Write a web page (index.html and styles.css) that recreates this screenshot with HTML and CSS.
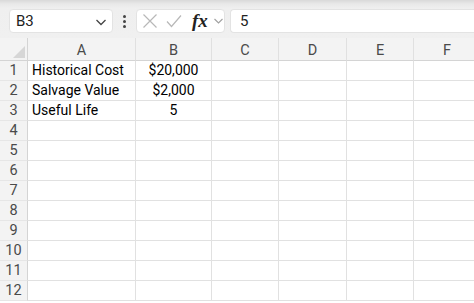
FILE: index.html
```html
<!DOCTYPE html>
<html>
<head>
<meta charset="utf-8">
<link rel="stylesheet" href="styles.css">
</head>
<body>
<div class="app">
  <div class="toolbar">
    <div class="namebox">
      <span class="name">B3</span>
      <svg class="chev" width="12" height="8" viewBox="0 0 12 8"><path d="M1.5 2 L6 6.5 L10.5 2" fill="none" stroke="#444" stroke-width="1.3"/></svg>
    </div>
    <div class="dots"><span></span><span></span><span></span></div>
    <div class="fxbox">
      <svg class="ix" width="16" height="16" viewBox="0 0 16 16"><path d="M1.5 1.5 L14.5 14.5 M14.5 1.5 L1.5 14.5" stroke="#b8b8b8" stroke-width="1.2" fill="none"/></svg>
      <svg class="ick" width="16" height="14" viewBox="0 0 16 14"><path d="M1 7.5 L5.5 12.5 L15 1.5" stroke="#b8b8b8" stroke-width="1.2" fill="none"/></svg>
      <span class="fx">fx</span>
      <svg class="chev2" width="11" height="8" viewBox="0 0 11 8"><path d="M1.5 2 L5.5 6 L9.5 2" fill="none" stroke="#a0a0a0" stroke-width="1.1"/></svg>
    </div>
    <div class="formula">5</div>
  </div>
  <div class="sheet">
    <div class="corner"><svg width="16" height="16" viewBox="0 0 16 16"><path d="M15 3 L15 15 L3 15 Z" fill="#d6d6d6"/></svg></div>
    <div class="ch">A</div><div class="ch">B</div><div class="ch">C</div><div class="ch">D</div><div class="ch">E</div><div class="ch">F</div>

    <div class="rh">1</div><div class="c">Historical Cost</div><div class="c ctr">$20,000</div><div class="c"></div><div class="c"></div><div class="c"></div><div class="c"></div>
    <div class="rh">2</div><div class="c">Salvage Value</div><div class="c ctr">$2,000</div><div class="c"></div><div class="c"></div><div class="c"></div><div class="c"></div>
    <div class="rh">3</div><div class="c">Useful Life</div><div class="c ctr">5</div><div class="c"></div><div class="c"></div><div class="c"></div><div class="c"></div>
    <div class="rh">4</div><div class="c"></div><div class="c"></div><div class="c"></div><div class="c"></div><div class="c"></div><div class="c"></div>
    <div class="rh">5</div><div class="c"></div><div class="c"></div><div class="c"></div><div class="c"></div><div class="c"></div><div class="c"></div>
    <div class="rh">6</div><div class="c"></div><div class="c"></div><div class="c"></div><div class="c"></div><div class="c"></div><div class="c"></div>
    <div class="rh">7</div><div class="c"></div><div class="c"></div><div class="c"></div><div class="c"></div><div class="c"></div><div class="c"></div>
    <div class="rh">8</div><div class="c"></div><div class="c"></div><div class="c"></div><div class="c"></div><div class="c"></div><div class="c"></div>
    <div class="rh">9</div><div class="c"></div><div class="c"></div><div class="c"></div><div class="c"></div><div class="c"></div><div class="c"></div>
    <div class="rh">10</div><div class="c"></div><div class="c"></div><div class="c"></div><div class="c"></div><div class="c"></div><div class="c"></div>
    <div class="rh">11</div><div class="c"></div><div class="c"></div><div class="c"></div><div class="c"></div><div class="c"></div><div class="c"></div>
    <div class="rh">12</div><div class="c"></div><div class="c"></div><div class="c"></div><div class="c"></div><div class="c"></div><div class="c"></div>
  </div>
</div>
</body>
</html>
```
FILE: styles.css
```css
* { box-sizing: border-box; }
html, body { margin: 0; padding: 0; background: #fff; }
body { width: 474px; height: 303px; overflow: hidden; font-family: Roboto, "Liberation Sans", sans-serif; }
.app { width: 474px; overflow: hidden; }
.toolbar {
  height: 38px;
  background: linear-gradient(#d9d9d9 0, #e9e9e9 4px, #efefef 8px, #f0f0f0 100%);
  display: flex;
  align-items: flex-start;
  padding: 9px 0 0 9px;
}
.namebox {
  width: 104px; height: 24px;
  background: #fff;
  border: 1px solid #e3e3e3;
  border-radius: 4px;
  display: flex; align-items: center; justify-content: space-between;
  padding: 0 5px 0 6px;
}
.name { font-size: 15px; color: #222; }
.chev { margin-top: 1px; }
.dots { width: 23px; height: 24px; display: flex; flex-direction: column; align-items: center; justify-content: center; gap: 2px; }
.dots span { width: 3px; height: 3px; background: #444; border-radius: 50%; }
.fxbox {
  width: 89px; height: 24px;
  background: #fff;
  border: 1px solid #e3e3e3;
  border-radius: 4px;
  display: flex; align-items: center;
  padding: 0 0 0 5px;
}
.ick { margin-left: 8px; }
.fx { font-family: "Liberation Serif", "DejaVu Serif", serif; font-style: italic; font-weight: bold; font-size: 19px; color: #222; margin-left: 10px; letter-spacing: 0; line-height: 20px; }
.chev2 { margin-left: 5px; }
.formula {
  margin-left: 5px;
  flex: 1; height: 24px;
  background: #fff;
  border: 1px solid #e3e3e3;
  border-right: none;
  border-radius: 4px 0 0 4px;
  font-size: 15px; color: #222;
  padding: 2px 0 0 9px;
}
.sheet {
  display: grid;
  grid-template-columns: 28px 108px 76px 67px 68px 67px 67px;
  grid-template-rows: 23px repeat(12, 20px);
  background: #fff;
}
.corner, .ch, .rh { background: #f3f3f3; color: #4a4a4a; font-size: 14.5px; }
.corner { border-right: 1px solid #d4d4d4; border-bottom: 1px solid #d4d4d4; display: flex; align-items: flex-end; justify-content: flex-end; padding: 0 1px 1px 0; }
.ch { display: flex; align-items: center; justify-content: center; border-right: 1px solid #e0e0e0; border-bottom: 1px solid #d4d4d4; padding-top: 2px; }
.rh { display: flex; align-items: center; justify-content: center; border-right: 1px solid #d4d4d4; border-bottom: 1px solid #e6e6e6; }
.c { border-right: 1px solid #e1e1e1; border-bottom: 1px solid #e1e1e1; font-size: 14px; color: #000; padding: 0 0 0 4px; line-height: 19px; white-space: nowrap; }
.ctr { text-align: center; padding-left: 0; }
```
